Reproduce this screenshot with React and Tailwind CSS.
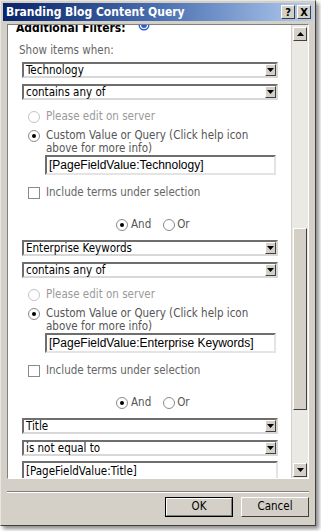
const Tri = ({ up }) => (
  <svg width="7" height="4" viewBox="0 0 7 4" className="block">
    <polygon points={up ? "3.5,0 7,4 0,4" : "0,0 7,0 3.5,4"} fill="#000" />
  </svg>
);

const Select = ({ value }) => (
  <div className="flex h-[16px] border-2 border-t-[#6e6e6e] border-l-[#6e6e6e] border-b-[#d8d8d8] border-r-[#d8d8d8] bg-white">
    <div className="flex-1 pl-[2px] text-[11.5px] leading-[12px] text-black">{value}</div>
    <div className="flex w-[11px] items-center justify-center border border-t-white border-l-white border-r-[#404040] border-b-[#404040] bg-[#d4d0c8]">
      <Tri />
    </div>
  </div>
);

const Input = ({ value, mono }) => (
  <div
    className={`h-[20px] border-2 border-t-[#6e6e6e] border-l-[#6e6e6e] border-b-[#e4e4e4] border-r-[#e4e4e4] bg-white pl-[2px] text-black ${
      mono
        ? "font-['Liberation_Sans',Arial,sans-serif] text-[12px] leading-[16px]"
        : "text-[11.5px] leading-[16px]"
    }`}
  >
    {value}
  </div>
);

const Radio = ({ checked, disabled }) => (
  <div
    className={`flex h-[12px] w-[12px] shrink-0 items-center justify-center rounded-full border ${
      disabled ? "border-[#c4c4c4]" : "border-[#8a8a8a]"
    } bg-white`}
  >
    {checked && <div className="h-[4px] w-[4px] rounded-full bg-black" />}
  </div>
);

const Checkbox = () => (
  <div className="h-[12px] w-[12px] shrink-0 border border-[#8a8a8a] bg-white" />
);

const FilterBlock = ({ field, op, value, first }) => (
  <>
    <div className={first ? "mt-[5px]" : "mt-[8px]"}>
      <Select value={field} />
    </div>
    <div className="mt-[6px]">
      <Select value={op} />
    </div>
    <div className="mt-[10px] flex h-[14px] items-center pl-[6px]">
      <Radio disabled />
      <span className="ml-[6px] text-[11.5px] text-[#9a9a9a]">Please edit on server</span>
    </div>
    <div className="mt-[5px] flex items-start pl-[6px]">
      <div className="mt-[1px]">
        <Radio checked />
      </div>
      <div className="ml-[6px] text-[11.5px] leading-[13px] text-[#555]">
        Custom Value or Query (Click help icon
        <br />
        above for more info)
      </div>
    </div>
    <div className="ml-[23px] mr-[2px]">
      <Input value={value} mono />
    </div>
    <div className="mt-[11px] flex h-[14px] items-center pl-[6px]">
      <Checkbox />
      <span className="ml-[6px] text-[11.5px] text-[#666]">Include terms under selection</span>
    </div>
    <div className="mt-[18px] flex h-[14px] items-center pl-[94px] text-[11.5px] text-[#555]">
      <Radio checked />
      <span className="ml-[3px]">And</span>
      <div className="ml-[12px]">
        <Radio />
      </div>
      <span className="ml-[2px]">Or</span>
    </div>
  </>
);

export default function App() {
  return (
    <div className="h-[531px] w-[321px] bg-white font-['DejaVu_Sans_Condensed','DejaVu_Sans',Tahoma,sans-serif]">
      <div className="flex h-[526px] w-[316px] flex-col border border-t-[#e8e6e0] border-l-[#e8e6e0] border-b-[#404040] border-r-[#404040] bg-[#d4d0c8] p-[2px] shadow-[3px_3px_4px_rgba(0,0,0,0.45)]">
        {/* title bar */}
        <div className="flex h-[18px] items-center bg-gradient-to-r from-[#0a246a] via-[#4a6fb0] to-[#b4cdf0] pl-[3px] pr-[2px]">
          <span className="flex-1 text-[12px] font-bold text-white">Branding Blog Content Query</span>
          <div className="flex h-[14px] w-[14px] items-center justify-center border border-t-white border-l-white border-b-[#404040] border-r-[#404040] bg-[#d4d0c8] text-[11px] font-bold leading-none text-black">
            ?
          </div>
          <div className="ml-[2px] flex h-[14px] w-[14px] items-center justify-center border border-t-white border-l-white border-b-[#404040] border-r-[#404040] bg-[#d4d0c8] text-[11px] font-bold leading-none text-black">
            X
          </div>
        </div>

        {/* scroll panel */}
        <div className="ml-[4px] mt-[3px] flex h-[455px] w-[302px] border border-t-[#808080] border-l-[#808080] border-b-white border-r-white bg-white">
          <div className="flex-1 overflow-hidden pl-[14px] pr-[13px]">
            <div className="-mt-[5px] flex h-[16px] items-center">
              <span className="-ml-[6px] text-[12px] font-bold text-black">Additional Filters:</span>
              <svg width="12" height="12" viewBox="0 0 12 12" className="ml-[12px] -mt-[6px]">
                <circle cx="6" cy="6" r="5.5" fill="#2a5bd7" />
                <circle cx="6" cy="6" r="3.5" fill="none" stroke="#fff" strokeWidth="1.2" />
              </svg>
            </div>
            <div className="-ml-[3px] mt-[7px] h-[14px] text-[11.5px] leading-[14px] text-[#666]">
              Show items when:
            </div>
            <FilterBlock first field="Technology" op="contains any of" value="[PageFieldValue:Technology]" />
            <FilterBlock field="Enterprise Keywords" op="contains any of" value="[PageFieldValue:Enterprise Keywords]" />
            <div className="mt-[8px]">
              <Select value="Title" />
            </div>
            <div className="mt-[6px]">
              <Select value="is not equal to" />
            </div>
            <div className="mt-[5px]">
              <Input value="[PageFieldValue:Title]" />
            </div>
          </div>

          {/* scrollbar */}
          <div className="flex w-[17px] flex-col border-l border-[#d4d0c8] bg-[#ebe9e4] px-[1px] pb-[1px]">
            <div className="mt-[2px] flex h-[14px] w-[14px] items-center justify-center border border-t-white border-l-white border-b-[#404040] border-r-[#404040] bg-[#d4d0c8]">
              <Tri up />
            </div>
            <div className="mt-[187px] h-[182px] w-[14px] border border-t-white border-l-white border-b-[#404040] border-r-[#404040] bg-[#d4d0c8]" />
            <div className="flex-1" />
            <div className="flex h-[14px] w-[14px] items-center justify-center border border-t-white border-l-white border-b-[#404040] border-r-[#404040] bg-[#d4d0c8]">
              <Tri />
            </div>
          </div>
        </div>

        {/* separator */}
        <div className="ml-[4px] mt-[12px] w-[302px] border-t border-b border-t-[#808080] border-b-white" />

        {/* buttons */}
        <div className="mt-[4px] flex justify-end gap-[8px] pr-[4px]">
          <button className="h-[20px] w-[68px] border border-black bg-[#d4d0c8] text-[11.5px] text-black">
            <div className="flex h-full items-center justify-center border border-t-white border-l-white border-b-[#808080] border-r-[#808080]">
              OK
            </div>
          </button>
          <button className="h-[20px] w-[68px] border border-t-white border-l-white border-b-[#404040] border-r-[#404040] bg-[#d4d0c8] text-[11.5px] text-black">
            Cancel
          </button>
        </div>
      </div>
    </div>
  );
}
